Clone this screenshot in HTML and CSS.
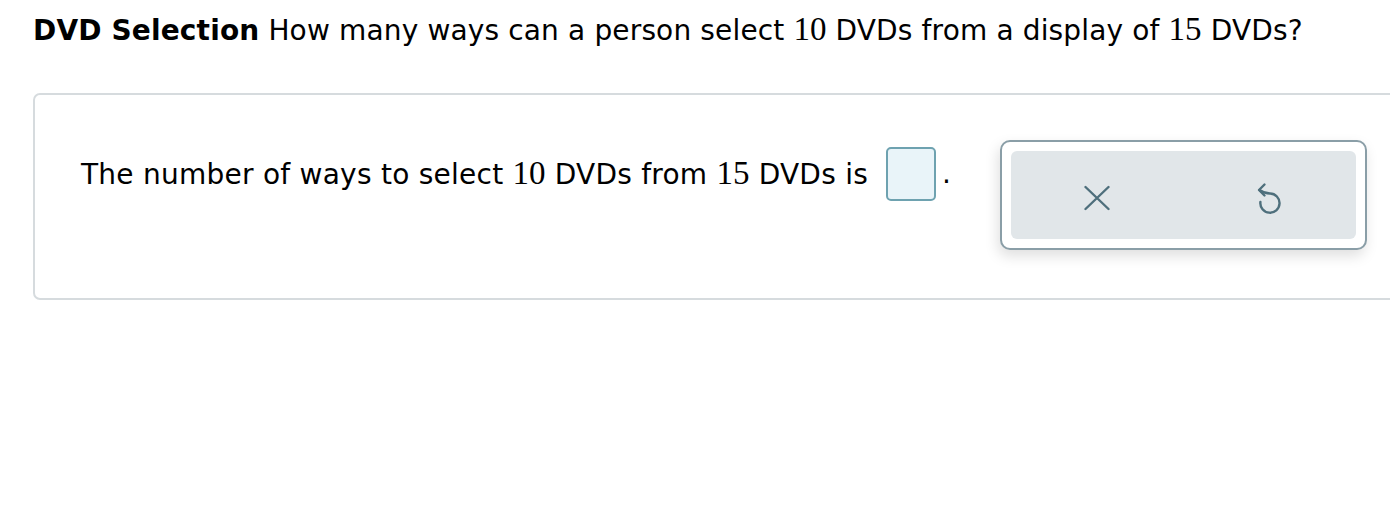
FILE: index.html
```html
<!DOCTYPE html>
<html>
<head>
<meta charset="utf-8">
<link rel="stylesheet" href="styles.css">
</head>
<body>
<p class="question"><b>DVD Selection</b> How many ways can a person select <span class="num">10</span> DVDs from a display of <span class="num">15</span> DVDs?</p>
<div class="card">
  <div class="row">
    <div class="sentence">
      <span>The number of ways to select <span class="num">10</span> DVDs from <span class="num">15</span> DVDs is</span>
      <span class="answer"></span>
      <span class="dot">.</span>
    </div>
    <div class="panel">
      <div class="tools">
        <button class="tool" aria-label="Clear">
          <svg width="26" height="26" viewBox="0 0 26 26"><path d="M1.5 2 L24.5 24 M24.5 2 L1.5 24" stroke="#4e6f7c" stroke-width="2.4" stroke-linecap="round" fill="none"/></svg>
        </button>
        <button class="tool" aria-label="Undo">
          <svg width="28" height="32" viewBox="0 0 28 32"><path d="M8.5 2.5 L3 8 L8.5 13.5" stroke="#4e6f7c" stroke-width="2.4" stroke-linecap="round" stroke-linejoin="round" fill="none"/><path d="M3.5 8 C7 10.5 10 11.5 14 11.5 A9.6 9.6 0 1 1 4.4 20" stroke="#4e6f7c" stroke-width="2.4" stroke-linecap="round" fill="none"/></svg>
        </button>
      </div>
    </div>
  </div>
</div>
</body>
</html>
```
FILE: styles.css
```css
html, body {
  margin: 0;
  padding: 0;
  overflow: hidden;
  background: #fff;
}
body {
  padding-left: 33px;
  font-family: "DejaVu Sans", Verdana, sans-serif;
  color: #000;
  font-size: 28px;
  letter-spacing: 0.15px;
}
.question {
  margin: 0;
  padding-top: 14px;
  line-height: 34px;
  height: 34px;
  white-space: nowrap;
}
.num {
  font-family: "Liberation Serif", "Times New Roman", serif;
  font-size: 33px;
  line-height: 0;
  letter-spacing: 0;
}
.card {
  margin-top: 45px;
  width: 1400px;
  height: 207px;
  border: 2px solid #d6dbde;
  border-radius: 7px;
  box-sizing: border-box;
  padding: 45px 0 0 46px;
}
.row {
  display: flex;
  align-items: flex-start;
}
.sentence {
  display: flex;
  align-items: center;
  margin-top: 7px;
  height: 54px;
  white-space: nowrap;
  letter-spacing: 0.25px;
}
.answer {
  display: inline-block;
  width: 50px;
  height: 54px;
  box-sizing: border-box;
  border: 2px solid #6ea2b0;
  border-radius: 5px;
  background: #e9f4f9;
  margin-left: 18px;
}
.dot {
  margin-left: 6px;
  position: relative;
  top: -1px;
}
.panel {
  margin-left: 49px;
  width: 367px;
  height: 110px;
  box-sizing: border-box;
  border: 2px solid #8a9ea7;
  border-radius: 10px;
  background: #fff;
  padding: 9px;
  box-shadow: -2px 6px 14px rgba(0, 0, 0, 0.13);
}
.tools {
  display: flex;
  height: 100%;
  background: #e1e6e9;
  border-radius: 6px;
}
.tool {
  flex: 1;
  border: 0;
  background: transparent;
  display: flex;
  align-items: center;
  justify-content: center;
  padding: 0;
  padding-top: 6px;
}
```
